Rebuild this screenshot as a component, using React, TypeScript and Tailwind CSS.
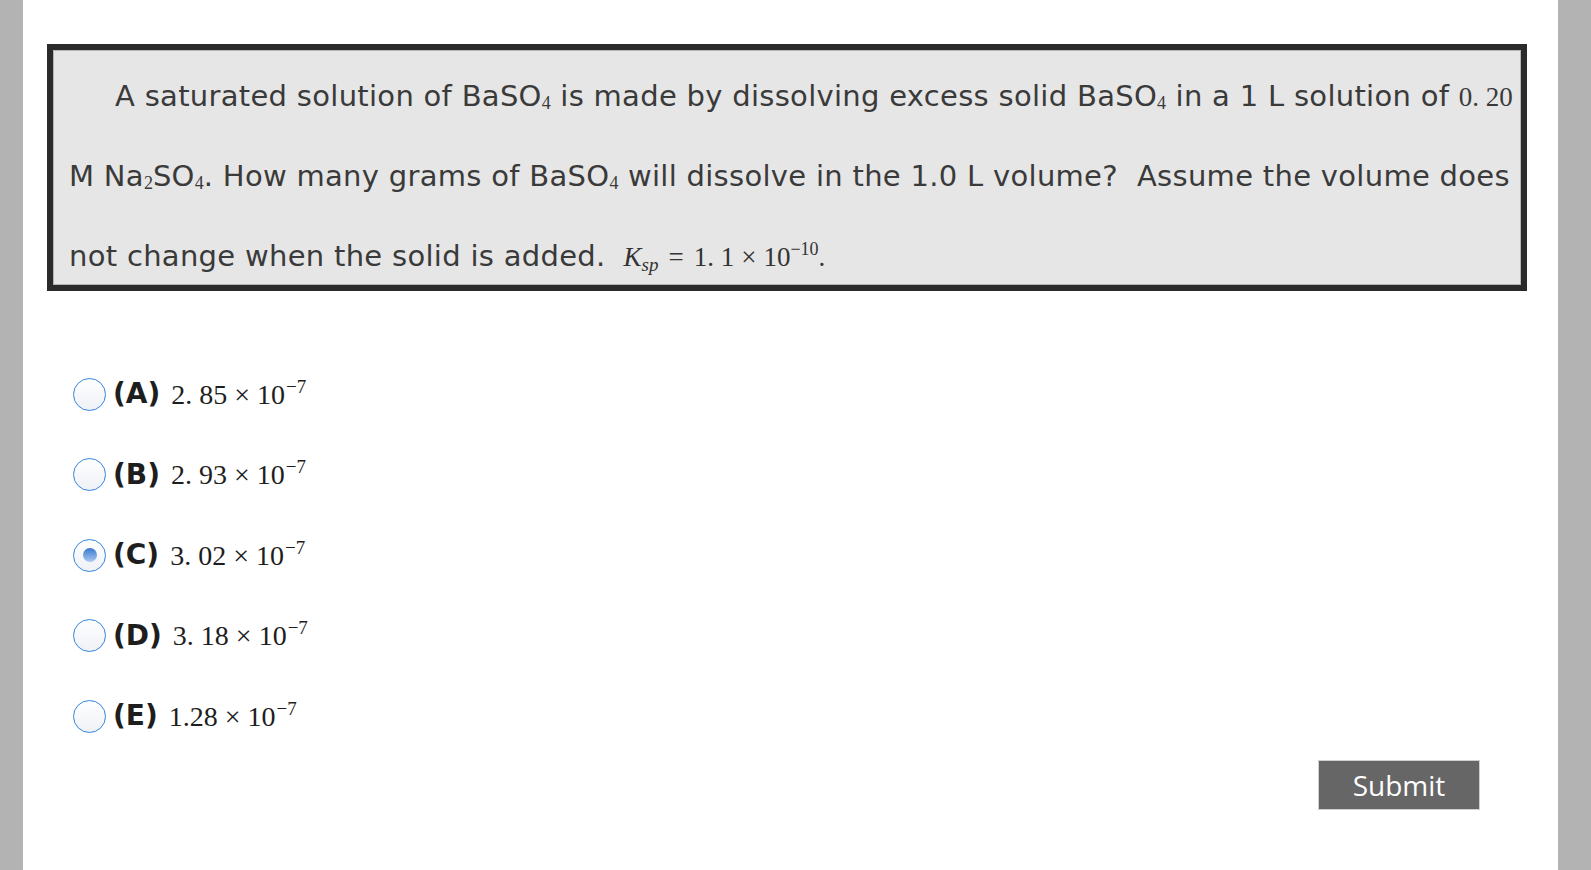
import React from "react";

const serif = "font-['Liberation_Serif',serif]";

function Sub({ children }: { children: React.ReactNode }) {
  return (
    <span className={`${serif} text-[18px] leading-none tracking-normal align-[-3px]`}>{children}</span>
  );
}

function Radio({ checked }: { checked?: boolean }) {
  return (
    <span className="flex h-[33px] w-[33px] shrink-0 items-center justify-center rounded-full border-[1.5px] border-[#3584dc] bg-gradient-to-b from-white to-[#eef1f6]">
      {checked && (
        <span className="h-[14px] w-[14px] rounded-full bg-gradient-to-b from-[#3a78cc] to-[#a9c9f2]" />
      )}
    </span>
  );
}

const options = [
  { key: "A", value: "2. 85", checked: false },
  { key: "B", value: "2. 93", checked: false },
  { key: "C", value: "3. 02", checked: true },
  { key: "D", value: "3. 18", checked: false },
  { key: "E", value: "1.28", checked: false },
];

export default function App() {
  return (
    <div className="flex h-[870px] w-[1591px] overflow-hidden bg-white">
      <div className="w-[23px] shrink-0 bg-[#b3b3b3]" />

      <main className="flex flex-1 flex-col pl-[24px] pr-[31px] pt-[44px]">
        {/* question box */}
        <div className="h-[247px] overflow-hidden border-[6px] border-[#2b2b2b] bg-[#e6e6e6] shadow-[inset_0_0_0_1px_#b5b5b5]">
          <p className="pl-[16px] pr-[6px] pt-[6px] indent-[46px] font-['DejaVu_Sans',sans-serif] text-[29px] leading-[80px] tracking-[0.3px] text-[#3a3a3a]">
            A saturated solution of BaSO<Sub>4</Sub> is made by dissolving excess solid BaSO<Sub>4</Sub> in a 1 L solution of{" "}
            <span className={`${serif} text-[27px] leading-none tracking-normal`}>0. 20</span>
            <br />
            M Na<Sub>2</Sub>SO<Sub>4</Sub>. How many grams of BaSO<Sub>4</Sub> will dissolve in the 1.0 L volume?&nbsp; Assume the volume does
            <br />
            not change when the solid is added.
            <span className={`${serif} ml-[18px] text-[27px] leading-none tracking-normal text-[#333]`}>
              <i>K</i>
              <i className="text-[19px] align-[-5px]">sp</i>
              <span className="mx-[10px]">=</span>1. 1<span className="mx-[7px]">×</span>10
              <span className="text-[18px] align-[11px]">−10</span>.
            </span>
          </p>
        </div>

        {/* answer choices */}
        <div className="mt-[63px] flex flex-col pl-[26px]">
          {options.map((o) => (
            <label key={o.key} className="flex h-[80.5px] items-center gap-[7px] text-[#1e1e1e]">
              <Radio checked={o.checked} />
              <span className="font-['DejaVu_Sans',sans-serif] text-[28px] font-bold">({o.key})</span>
              <span className={`${serif} ml-[4px] text-[28px]`}>
                {o.value}
                <span className="mx-[7px] text-[28px]">×</span>10
                <span className="ml-[1px] text-[19px] align-[11px]">−7</span>
              </span>
            </label>
          ))}
        </div>

        <div className="mt-[3px] flex justify-end pr-[47px]">
          <button className="h-[50px] w-[162px] border border-[#cfcfcf] bg-[#666666] font-['Open_Sans',sans-serif] text-[28px] text-white">
            Submit
          </button>
        </div>
      </main>

      <div className="w-[33px] shrink-0 bg-[#b3b3b3]" />
    </div>
  );
}
